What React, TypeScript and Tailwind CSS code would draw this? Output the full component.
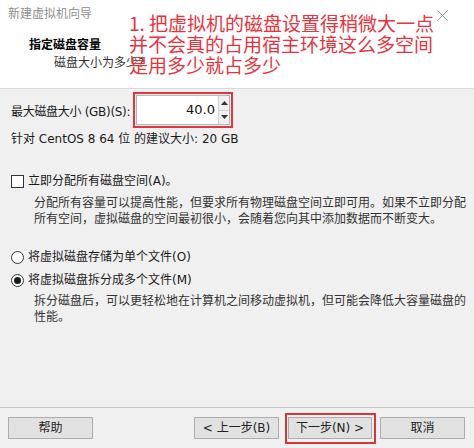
import React from "react";

const F = { fontFamily: '"DejaVu Sans", "Noto Sans CJK SC", sans-serif' };

function Btn({ children, className = "" }: { children: React.ReactNode; className?: string }) {
  return (
    <div
      className={`flex h-[22px] items-center justify-center border border-[#adadad] bg-[#e1e1e1] text-[12px] text-[#222] ${className}`}
    >
      {children}
    </div>
  );
}

export default function App() {
  return (
    <div
      className="relative flex h-[448px] w-[474px] flex-col overflow-hidden bg-[#f0f0f0] text-[12px] text-[#1a1a1a]"
      style={F}
    >
      {/* header */}
      <div className="h-[89px] shrink-0 border-b border-[#d9d9d9] bg-white">
        <div className="flex h-[28px] items-center justify-between pl-[8px] pr-[26px]">
          <span className="text-[12px] text-[#8f8f8f]">新建虚拟机向导</span>
          <svg width="11" height="11" viewBox="0 0 11 11" className="mt-[2px]">
            <path d="M0.5 0.5 L10.5 10.5 M10.5 0.5 L0.5 10.5" stroke="#9a9a9a" strokeWidth="1" />
          </svg>
        </div>
        <div className="mt-[9px] pl-[29px] text-[12px] font-bold leading-[16px] text-black">指定磁盘容量</div>
        <div className="mt-[2px] pl-[54px] text-[12px] leading-[16px] text-[#333]">磁盘大小为多少?</div>
      </div>

      {/* annotation overlay */}
      <div
        className="absolute left-[129px] top-[12px] whitespace-nowrap text-[19px] leading-[21px] text-[#e8323c]"
        style={{ fontFamily: '"Noto Sans CJK SC", sans-serif' }}
      >
        <div>1. 把虚拟机的磁盘设置得稍微大一点</div>
        <div>并不会真的占用宿主环境这么多空间</div>
        <div>是用多少就占多少</div>
      </div>

      {/* body */}
      <div className="flex-1 pl-[11px] pr-2">
        <div className="mt-[3px] flex h-[36px] items-center">
          <span className="w-[122px] whitespace-nowrap pt-[4px] tracking-[-0.3px]">最大磁盘大小 (GB)(S):</span>
          <div className="flex h-[36px] w-[100px] border-2 border-[#e2343e] p-[1px]">
            <div className="flex flex-1 border border-[#b5b5b5] bg-white">
              <div className="flex flex-1 items-center justify-end pr-[3px] text-[13px] text-[#111]">40.0</div>
              <div className="flex w-[11px] flex-col">
                <div className="flex flex-1 items-center justify-center border-b border-l border-[#d0d0d0] bg-[#f0f0f0]">
                  <svg width="7" height="4" viewBox="0 0 7 4">
                    <path d="M0 4 L3.5 0 L7 4 Z" fill="#333" />
                  </svg>
                </div>
                <div className="flex flex-1 items-center justify-center border-l border-[#d0d0d0] bg-[#f0f0f0]">
                  <svg width="7" height="4" viewBox="0 0 7 4">
                    <path d="M0 0 L3.5 4 L7 0 Z" fill="#333" />
                  </svg>
                </div>
              </div>
            </div>
          </div>
        </div>
        <div className="mt-[3px] h-[16px] whitespace-nowrap leading-[16px]">针对 CentOS 8 64 位 的建议大小: 20 GB</div>

        <div className="mt-[26px] flex h-[16px] items-center">
          <div className="h-[13px] w-[13px] border border-[#333] bg-white" />
          <span className="ml-[4px] leading-[16px]">立即分配所有磁盘空间(A)。</span>
        </div>
        <div className="mt-[6px] whitespace-nowrap pl-[23px] leading-[16px] text-[#333]">
          <div>分配所有容量可以提高性能，但要求所有物理磁盘空间立即可用。如果不立即分配</div>
          <div>所有空间，虚拟磁盘的空间最初很小，会随着您向其中添加数据而不断变大。</div>
        </div>

        <div className="mt-[22px] flex h-[16px] items-center">
          <div className="h-[13px] w-[13px] rounded-full border border-[#333] bg-white" />
          <span className="ml-[4px] leading-[16px]">将虚拟磁盘存储为单个文件(O)</span>
        </div>
        <div className="mt-[7px] flex h-[16px] items-center">
          <div className="flex h-[13px] w-[13px] items-center justify-center rounded-full border border-[#333] bg-white">
            <div className="h-[7px] w-[7px] rounded-full bg-[#1a1a1a]" />
          </div>
          <span className="ml-[4px] leading-[16px]">将虚拟磁盘拆分成多个文件(M)</span>
        </div>
        <div className="mt-[5px] whitespace-nowrap pl-[23px] leading-[16px] text-[#333]">
          <div>拆分磁盘后，可以更轻松地在计算机之间移动虚拟机，但可能会降低大容量磁盘的</div>
          <div>性能。</div>
        </div>
      </div>

      {/* footer */}
      <div className="h-[41px] shrink-0 border-t border-[#c8c8c8] pl-[8px] pr-[9px] pt-[9px]">
        <div className="flex">
          <Btn className="w-[85px]">帮助</Btn>
          <Btn className="ml-auto w-[85px]">&lt; 上一步(B)</Btn>
          <div className="relative ml-[9px]">
            <Btn className="w-[84px]">下一步(N) &gt;</Btn>
            <div className="absolute -bottom-[5px] -left-[3px] -right-[4px] -top-[4px] border-2 border-[#d8343c]" />
          </div>
          <Btn className="ml-[8px] w-[85px]">取消</Btn>
        </div>
      </div>
    </div>
  );
}
